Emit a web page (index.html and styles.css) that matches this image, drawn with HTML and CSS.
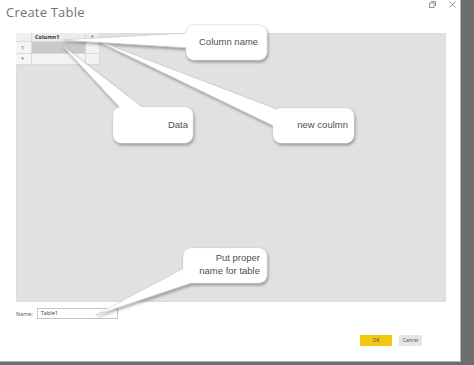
FILE: index.html
```html
<!DOCTYPE html>
<html>
<head>
<meta charset="utf-8">
<link rel="stylesheet" href="styles.css">
</head>
<body>
<div class="screen">
  <div class="dialog">
    <div class="titlebar">
      <div class="title">Create Table</div>
      <div class="winbtns">
        <svg class="wicon" width="7" height="7" viewBox="0 0 7 7"><rect x="0.5" y="2" width="4.5" height="4.5" fill="none" stroke="#8a8a8a" stroke-width="0.9"/><path d="M2 0.5H6.5V5" fill="none" stroke="#8a8a8a" stroke-width="0.9"/></svg>
        <svg class="wicon" width="7" height="7" viewBox="0 0 7 7"><path d="M0.5 0.5L6.5 6.5M6.5 0.5L0.5 6.5" stroke="#8a8a8a" stroke-width="0.9"/></svg>
      </div>
    </div>
    <div class="canvas">
      <div class="grid">
        <div class="cell corner"></div>
        <div class="cell colhead">Column1</div>
        <div class="cell addcol">*</div>
        <div class="cell rowhead">1</div>
        <div class="cell data"></div>
        <div class="cell"></div>
        <div class="cell rowhead">*</div>
        <div class="cell"></div>
        <div class="cell"></div>
      </div>
    </div>
    <div class="namerow">
      <label class="namelabel">Name:</label>
      <div class="nameinput">Table1</div>
    </div>
    <div class="buttons">
      <div class="btn ok">OK</div>
      <div class="btn cancel">Cancel</div>
    </div>
  </div>

  <svg class="callouts" width="474" height="365" viewBox="0 0 474 365">
    <defs>
      <filter id="sh" x="-20%" y="-20%" width="140%" height="140%">
        <feDropShadow dx="1" dy="2" stdDeviation="1.4" flood-color="#000" flood-opacity="0.35"/>
      </filter>
    </defs>
    <g filter="url(#sh)" fill="#fff" stroke="#c4c4c4" stroke-width="0.6">
      <path d="M63 40 L192 33 L192 48 Z"/>
      <rect x="186" y="25" width="81" height="35" rx="8"/>
    </g>
    <g filter="url(#sh)" fill="#fff" stroke="#c4c4c4" stroke-width="0.6">
      <path d="M62 45 L124 112 L148 112 Z"/>
      <rect x="113" y="107" width="80" height="36" rx="8"/>
    </g>
    <g filter="url(#sh)" fill="#fff" stroke="#c4c4c4" stroke-width="0.6">
      <path d="M98 41 L284 112 L278 128 Z"/>
      <rect x="273" y="108" width="81" height="35" rx="8"/>
    </g>
    <g filter="url(#sh)" fill="#fff" stroke="#c4c4c4" stroke-width="0.6">
      <path d="M96 315 L188 266 L194 282 Z"/>
      <rect x="183" y="248" width="84" height="35" rx="8"/>
    </g>
    <g fill="#fff">
      <path d="M70 40 L192 33.6 L192 47.4 Z"/>
      <rect x="186.3" y="25.3" width="80.4" height="34.4" rx="7.7"/>
      <path d="M68 51 L124.6 111.6 L147.4 111.6 Z"/>
      <rect x="113.3" y="107.3" width="79.4" height="35.4" rx="7.7"/>
      <path d="M105 44 L283.6 112.4 L278.4 127.4 Z"/>
      <rect x="273.3" y="108.3" width="80.4" height="34.4" rx="7.7"/>
      <path d="M102 312 L188.4 266.6 L193.6 281.6 Z"/>
      <rect x="183.3" y="248.3" width="83.4" height="34.4" rx="7.7"/>
    </g>
  </svg>
  <div class="label lbl-colname">Column name</div>
  <div class="label lbl-data">Data</div>
  <div class="label lbl-newcol">new coulmn</div>
  <div class="label lbl-proper">Put proper<br>name for table</div>
</div>
</body>
</html>
```
FILE: styles.css
```css
html, body {
  margin: 0;
  padding: 0;
}
body {
  background: #6e6e6e;
  width: 474px;
  height: 365px;
  overflow: hidden;
}
.screen {
  position: relative;
  width: 474px;
  height: 365px;
}
.dialog {
  width: 460px;
  height: 361px;
  background: #fff;
  border-right: 1px solid #b8b8b8;
  border-bottom: 1px solid #b8b8b8;
  display: flex;
  flex-direction: column;
  font-family: "Open Sans", "Noto Sans", sans-serif;
}
.titlebar {
  height: 33px;
  display: flex;
  justify-content: space-between;
  align-items: flex-start;
}
.title {
  margin: 4px 0 0 6px;
  font-size: 13px;
  line-height: 17px;
  color: #727272;
  letter-spacing: 0.2px;
}
.winbtns {
  display: flex;
  gap: 13px;
  margin: 1px 4px 0 0;
}
.wicon {
  display: block;
}
.canvas {
  margin-left: 16px;
  width: 430px;
  height: 269px;
  background: #e1e1e1;
  box-shadow: inset 0 0 0 1px #dcdcdc;
}
.grid {
  display: grid;
  grid-template-columns: 16px 54px 14px;
  grid-template-rows: 9px 12px 11px;
  width: 84px;
}
.cell {
  background: #f3f3f3;
  border-right: 1px solid #dadada;
  border-bottom: 1px solid #dadada;
  box-sizing: border-box;
  font-size: 5.5px;
  line-height: 8px;
  color: #444;
}
.corner {
  background: #f0f0f0;
}
.colhead {
  font-weight: 700;
  padding-left: 3px;
  color: #333;
  background: #ececec;
}
.addcol {
  text-align: center;
  font-size: 5px;
  background: #ececec;
}
.rowhead {
  padding-left: 5px;
  display: flex;
  align-items: center;
  background: #f5f5f5;
}
.data {
  background: #c9c9c9;
}
.namerow {
  margin: 6px 0 0 16px;
  display: flex;
  align-items: center;
  gap: 4px;
  height: 11px;
}
.namelabel {
  font-size: 5.5px;
  color: #555;
}
.nameinput {
  width: 81px;
  height: 11px;
  box-sizing: border-box;
  border: 1px solid #c6c6c6;
  font-size: 5.5px;
  line-height: 9px;
  padding-left: 3px;
  color: #333;
}
.buttons {
  margin: 16px 38px 0 0;
  display: flex;
  justify-content: flex-end;
  gap: 7px;
}
.btn {
  height: 11px;
  font-size: 5px;
  line-height: 11px;
  text-align: center;
  color: #444;
}
.ok {
  width: 32px;
  background: #f2c811;
}
.cancel {
  width: 23px;
  background: #e6e6e6;
}
.callouts {
  position: absolute;
  left: 0;
  top: 0;
}
.label {
  position: absolute;
  font-family: "Liberation Sans", Arial, sans-serif;
  font-size: 9.5px;
  line-height: 13px;
  color: #4f4f4f;
  white-space: nowrap;
}
.lbl-colname {
  left: 199px;
  top: 35px;
}
.lbl-data {
  right: 286px;
  top: 118px;
  text-align: right;
}
.lbl-newcol {
  right: 126px;
  top: 118px;
  text-align: right;
}
.lbl-proper {
  right: 214px;
  top: 251px;
  text-align: right;
}
```
